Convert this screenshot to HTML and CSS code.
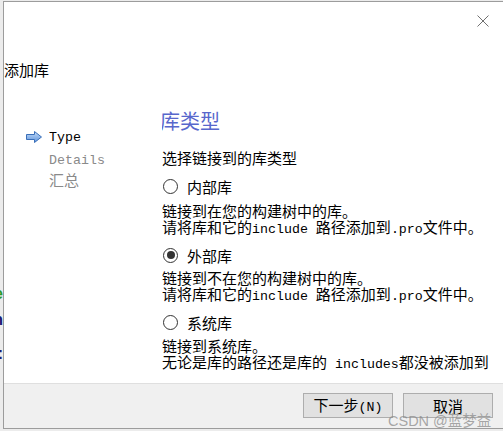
FILE: index.html
```html
<!DOCTYPE html>
<html lang="zh-CN">
<head>
<meta charset="utf-8">
<title>添加库</title>
<link rel="stylesheet" href="styles.css">
</head>
<body>
<div class="page">
  <div class="behind">
    <span class="frag frag-g">e</span>
    <span class="frag frag-n">n</span>
    <span class="frag frag-c">:</span>
  </div>
  <div class="window">
    <div class="titlebar">
      <svg class="close" width="12" height="12" viewBox="0 0 12 12"><path d="M0.5 0.5 L11.5 11.5 M11.5 0.5 L0.5 11.5" stroke="#707070" stroke-width="1" fill="none"/></svg>
    </div>
    <div class="title">添加库</div>
    <div class="main">
      <nav class="nav">
        <div class="step step-current">
          <svg class="arrow" width="16" height="12" viewBox="0 0 16 12">
            <defs>
              <linearGradient id="ag" x1="0" y1="0" x2="0" y2="1">
                <stop offset="0" stop-color="#c4dcf8"/>
                <stop offset="1" stop-color="#5d93dc"/>
              </linearGradient>
            </defs>
            <polygon points="0.5,3.5 8.5,3.5 8.5,0.5 15.5,6 8.5,11.5 8.5,8.5 0.5,8.5" fill="url(#ag)" stroke="#3a6fb8" stroke-width="1"/>
          </svg>
          <span class="m">Type</span>
        </div>
        <div class="step step-off"><span class="m">Details</span></div>
        <div class="step step-off">汇总</div>
      </nav>
      <section class="content">
        <h1 class="heading">库类型</h1>
        <p class="line sub">选择链接到的库类型</p>
        <div class="opt opt-first"><span class="radio"></span><span>内部库</span></div>
        <p class="desc desc-first">链接到在您的构建树中的库。<br>请将库和它的<span class="m">include </span>路径添加到<span class="m">.pro</span>文件中。</p>
        <div class="opt"><span class="radio radio-on"></span><span>外部库</span></div>
        <p class="desc desc-tight">链接到不在您的构建树中的库。<br>请将库和它的<span class="m">include </span>路径添加到<span class="m">.pro</span>文件中。</p>
        <div class="opt"><span class="radio"></span><span>系统库</span></div>
        <p class="desc">链接到系统库。<br>无论是库的路径还是库的<span class="m"> includes</span>都没被添加到</p>
      </section>
    </div>
    <footer class="footer">
      <button class="btn">下一步<span class="m">(N)</span></button>
      <button class="btn">取消</button>
    </footer>
  </div>
  <div class="watermark">CSDN @蓝梦益</div>
</div>
</body>
</html>
```
FILE: styles.css
```css
* { box-sizing: border-box; }
html, body { margin: 0; padding: 0; }
body {
  font-family: "Noto Sans CJK SC", "Liberation Sans", sans-serif;
  font-size: 15px;
  color: #000;
  background: #ececec;
}
.page {
  position: relative;
  display: flex;
  width: 503px;
  height: 431px;
  overflow: hidden;
}
.behind {
  width: 3px;
  flex: none;
  overflow: hidden;
  display: flex;
  flex-direction: column;
  align-items: flex-end;
  padding-top: 286px;
  font-family: "Liberation Sans", sans-serif;
  font-size: 16px;
  font-weight: bold;
  line-height: 16px;
}
.frag { display: block; height: 16px; white-space: nowrap; }
.frag-g { color: #2a9a2a; }
.frag-n { color: #1a1a70; margin-top: 10px; }
.frag-c { color: #1a1a70; margin-top: 18px; }

.window {
  flex: 1;
  margin-top: 1px;
  height: 428px;
  background: #fff;
  border-top: 1px solid #9c9c9c;
  border-left: 1px solid #9c9c9c;
  border-bottom: 1px solid #9c9c9c;
  display: flex;
  flex-direction: column;
}
.titlebar {
  height: 38px;
  display: flex;
  justify-content: flex-end;
  align-items: center;
  padding-right: 14px;
}
.close { display: block; }
.title {
  margin-top: 20px;
  height: 20px;
  line-height: 20px;
  font-size: 15px;
}
.main {
  margin-top: 20px;
  flex: 1;
  display: flex;
  overflow: hidden;
}
.nav {
  width: 158px;
  flex: none;
  padding-top: 25px;
  padding-left: 22px;
}
.step {
  height: 22px;
  line-height: 22px;
  white-space: nowrap;
}
.step-current {
  display: flex;
  align-items: center;
  gap: 7px;
  padding-top: 3px;
  line-height: 19px;
}
.arrow { display: block; margin-top: -1px; }
.step-off {
  padding-left: 23px;
  color: #8a8a8a;
}
.m {
  font-family: "Liberation Mono", monospace;
  font-size: 13.3px;
}
.content {
  flex: 1;
  min-width: 0;
  overflow: hidden;
  white-space: nowrap;
}
.heading {
  margin: 8px 0 0 -2px;
  font-size: 20px;
  line-height: 26px;
  font-weight: normal;
  color: #5767cc;
}
.line, .desc {
  margin: 0;
  line-height: 16px;
}
.sub { margin-top: 16px; }
.opt {
  display: flex;
  align-items: center;
  gap: 9px;
  height: 18px;
  margin-top: 8px;
  padding-left: 1px;
}
.opt-first { margin-top: 11px; }
.radio {
  position: relative;
  width: 15px;
  height: 15px;
  border-radius: 50%;
  border: 1px solid #333;
  background: #fff;
  flex: none;
}
.radio-on::after {
  content: "";
  position: absolute;
  left: 2.5px;
  top: 2.5px;
  width: 8px;
  height: 8px;
  border-radius: 50%;
  background: #333;
}
.desc { margin-top: 7px; }
.desc-first { margin-top: 8px; }
.desc-tight { margin-top: 6px; }

.footer {
  height: 45px;
  flex: none;
  border-top: 1px solid #dfdfdf;
  background: #f0f0f0;
  display: flex;
  justify-content: flex-end;
  align-items: flex-start;
  gap: 10px;
  padding: 9px 10px 0 0;
}
.btn {
  width: 90px;
  height: 25px;
  border: 1px solid #adadad;
  background: #e1e1e1;
  font-family: "Noto Sans CJK SC", sans-serif;
  font-size: 15px;
  line-height: 21px;
  color: #000;
  padding: 0;
}
.watermark {
  position: absolute;
  left: 388px;
  top: 409px;
  font-family: "Liberation Sans", "Noto Sans CJK SC", sans-serif;
  font-size: 14.5px;
  color: rgba(140, 140, 140, 0.75);
  white-space: nowrap;
}
```
